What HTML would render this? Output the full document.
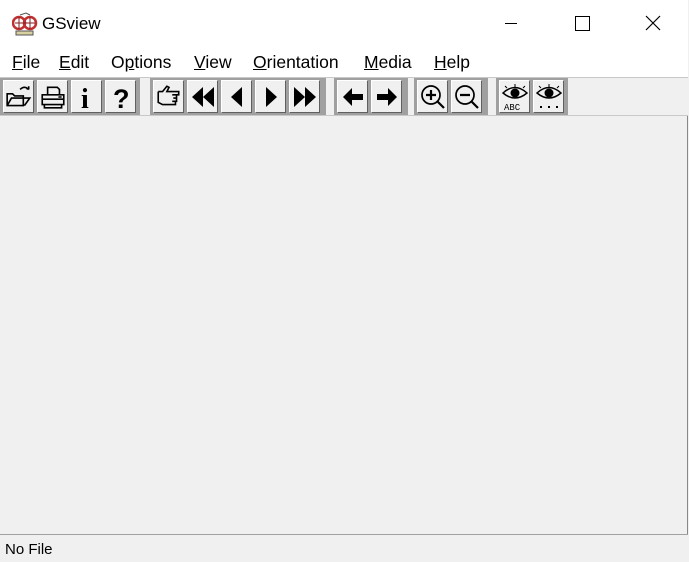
<!DOCTYPE html>
<html><head><style>
body{margin:0;width:689px;height:561px;position:relative;overflow:hidden;background:#f0f0f0;font-family:"Liberation Sans",sans-serif;}
.win{position:absolute;left:0;top:0;width:688px;height:561px;border-right:1px solid #888;border-top:1px solid #888;box-sizing:border-box;}
.title{position:absolute;left:0;top:0;width:688px;height:46px;background:#fff;}
.title span{position:absolute;left:42px;top:14px;font-size:17px;color:#000;}
.menu{position:absolute;left:0;top:46px;width:688px;height:31px;background:#fff;font-size:17.5px;}
.menu span{position:absolute;top:6px;}
.tb{position:absolute;top:77px;left:0;width:688px;height:39px;background:#f0f0f0;border-top:1px solid #c8c8c8;border-bottom:1px solid #c8c8c8;box-sizing:border-box;}
.grp{position:absolute;top:0;height:37px;background:#a0a0a0;}
.b{position:absolute;top:2px;width:31px;height:33px;background:#f0f0f0;border-top:1px solid #fff;border-left:1px solid #fff;border-right:1px solid #606060;border-bottom:1px solid #606060;box-sizing:border-box;}
.b svg{position:absolute;left:1px;top:2px;}
.status{position:absolute;left:0;top:534px;width:688px;height:27px;border-top:1px solid #a0a0a0;background:#f0f0f0;}
.status span{position:absolute;left:5px;top:6px;font-size:15px;}
</style></head><body>
<div class="win"></div>
<div class="title">
<svg style="position:absolute;left:12px;top:12px" width="26" height="24" viewBox="0 0 26 24"><circle cx="7" cy="11" r="6" fill="none" stroke="#c03030" stroke-width="2.5"/><circle cx="18" cy="11" r="6" fill="none" stroke="#c03030" stroke-width="2.5"/><path d="M3 11h20M7 5v12M18 5v12" stroke="#802020" stroke-width="1"/><rect x="4" y="19" width="17" height="4" fill="#d8d0a0" stroke="#555"/><path d="M8 3l6-2 4 2" stroke="#555" fill="none"/></svg>
<span>GSview</span>
<svg style="position:absolute;left:505px;top:23px" width="14" height="2"><rect width="12" height="1" fill="#000"/></svg>
<div style="position:absolute;left:575px;top:16px;width:13px;height:13px;border:1px solid #000"></div>
<svg style="position:absolute;left:645px;top:15px" width="16" height="16"><path d="M1 1L15 15M15 1L1 15" stroke="#000" stroke-width="1.2"/></svg>
</div>
<div class="menu">
<span style="left:12px"><u>F</u>ile</span>
<span style="left:59px"><u>E</u>dit</span>
<span style="left:111px">O<u>p</u>tions</span>
<span style="left:194px"><u>V</u>iew</span>
<span style="left:253px"><u>O</u>rientation</span>
<span style="left:364px"><u>M</u>edia</span>
<span style="left:434px"><u>H</u>elp</span>
</div>
<div class="tb">
<div class="grp" style="left:0;width:140px"></div>
<div class="grp" style="left:150px;width:176px"></div>
<div class="grp" style="left:334px;width:74px"></div>
<div class="grp" style="left:414px;width:74px"></div>
<div class="grp" style="left:496px;width:72px"></div>
<div class="b" style="left:3px"><svg width="28" height="28" viewBox="0 0 26 26" fill="none" stroke="#000" stroke-width="1.5"><path d="M2 21V10h5l2 2h8v9zM2 21l4-7h17l-5 7"/><path d="M14 6q4-4 8 0M22 6l-2-1M22 6v-3"/></svg></div>
<div class="b" style="left:37px"><svg width="28" height="28" viewBox="0 0 26 26" fill="none" stroke="#000" stroke-width="1.5"><path d="M8 11V4h9l2 2v5M3 11h20v9H3zM3 15h20M5 20v3h16v-3M18 13h3"/></svg></div>
<div class="b" style="left:71px"><svg width="28" height="28"><text x="8" y="25" font-family="Liberation Serif" font-weight="bold" font-size="28">i</text></svg></div>
<div class="b" style="left:105px"><svg width="28" height="28"><text x="6" y="25" font-family="Liberation Sans" font-weight="bold" font-size="27">?</text></svg></div>
<div class="b" style="left:153px"><svg width="28" height="28" viewBox="0 0 26 26" fill="none" stroke="#000" stroke-width="1.5"><path d="M3 8h4l4-5 2 1-2 4h11v3h-6M17 11h3v3h-3M17 14h3v3h-3M16 17h3v3H7l-4-2V8"/></svg></div>
<div class="b" style="left:187px"><svg width="28" height="28"><path d="M3 14l11-10v20zM14 14l11-10v20z" fill="#000"/></svg></div>
<div class="b" style="left:221px"><svg width="28" height="28"><path d="M8 14l11-10v20z" fill="#000"/></svg></div>
<div class="b" style="left:255px"><svg width="28" height="28"><path d="M9 4l11 10-11 10z" fill="#000"/></svg></div>
<div class="b" style="left:289px"><svg width="28" height="28"><path d="M3 4l11 10-11 10zM14 4l11 10-11 10z" fill="#000"/></svg></div>
<div class="b" style="left:337px"><svg width="28" height="28"><path d="M4 14l9-9v6h11v6H13v6z" fill="#000"/></svg></div>
<div class="b" style="left:371px"><svg width="28" height="28"><path d="M24 14l-9-9v6H4v6h11v6z" fill="#000"/></svg></div>
<div class="b" style="left:417px"><svg width="28" height="28" fill="none" stroke="#000" stroke-width="1.7"><circle cx="12" cy="12" r="9"/><path d="M7 12h10M12 7v10M18 18l7 7" stroke-width="2.2"/></svg></div>
<div class="b" style="left:451px"><svg width="28" height="28" fill="none" stroke="#000" stroke-width="1.7"><circle cx="12" cy="12" r="9"/><path d="M7 12h10M18 18l7 7" stroke-width="2.2"/></svg></div>
<div class="b" style="left:499px"><svg width="28" height="28"><path d="M2 10q12-11 24 0q-12 10-24 0z" fill="none" stroke="#000" stroke-width="1.5"/><circle cx="14" cy="10" r="4.5" fill="#000"/><path d="M4 3l2 2M14 1v3M24 3l-2 2" stroke="#000"/><text x="3" y="27" font-size="9" font-family="Liberation Mono">ABC</text></svg></div>
<div class="b" style="left:533px"><svg width="28" height="28"><path d="M2 10q12-11 24 0q-12 10-24 0z" fill="none" stroke="#000" stroke-width="1.5"/><circle cx="14" cy="10" r="4.5" fill="#000"/><path d="M4 3l2 2M14 1v3M24 3l-2 2" stroke="#000"/><rect x="5" y="23" width="2" height="2"/><rect x="13" y="23" width="2" height="2"/><rect x="21" y="23" width="2" height="2"/></svg></div>
</div>
<div class="status"><span>No File</span></div>
</body></html>
